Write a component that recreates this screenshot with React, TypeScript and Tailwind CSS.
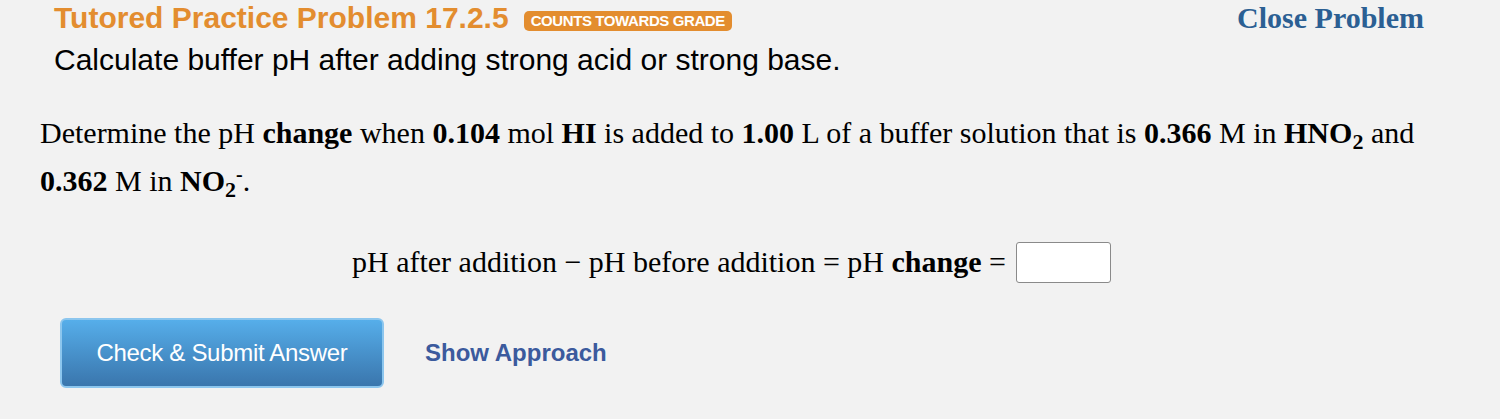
export default function App() {
  return (
    <div className="min-h-[419px] w-[1500px] bg-[#f2f2f2] text-black">
      <div className="flex items-start justify-between pl-[54px] pr-[76px] pt-[3px]">
        <div className="font-['Liberation_Sans',Arial,sans-serif]">
          <div className="flex items-center gap-[15px]">
            <h1 className="text-[30px] font-bold leading-[30px] text-[#e38d2f]">Tutored Practice Problem 17.2.5</h1>
            <span className="mt-[6px] rounded-[5px] bg-[#e38d2f] px-[7px] text-[15px] font-bold leading-[20px] tracking-[-0.4px] text-white">
              COUNTS TOWARDS GRADE
            </span>
          </div>
          <p className="mt-[12px] text-[30px] leading-[30px]">Calculate buffer pH after adding strong acid or strong base.</p>
        </div>
        <a href="#" className="font-['Liberation_Serif','Times_New_Roman',serif] text-[30px] font-bold leading-[30px] text-[#2b5f93]">
          Close Problem
        </a>
      </div>

      <div className="px-[40px] pt-[34px] font-['Liberation_Serif','Times_New_Roman',serif] text-[30px] leading-[48px]">
        <p>
          Determine the pH <b>change</b> when <b>0.104</b> mol <b>HI</b> is added to <b>1.00</b> L of a buffer solution that is{' '}
          <b>0.366</b> M in{' '}
          <b>
            HNO<sub className="text-[22px]">2</sub>
          </b>{' '}
          and <b>0.362</b> M in{' '}
          <b>
            NO<sub className="text-[22px]">2</sub>
            <sup className="text-[20px]">-</sup>
          </b>
          .
        </p>

        <div className="mt-[33px] flex items-center pl-[312px]">
          <span>
            pH after addition − pH before addition = pH <b>change</b> =
          </span>
          <input
            type="text"
            className="ml-[10px] h-[41px] w-[95px] rounded-[3px] border border-[#8a8a8a] bg-white"
          />
        </div>
      </div>

      <div className="mt-[32px] flex items-center pl-[60px] font-['Liberation_Sans',Arial,sans-serif]">
        <button className="h-[70px] w-[324px] rounded-[6px] border-2 border-[#8cc6ee] bg-gradient-to-b from-[#56aeea] to-[#3a76ad] text-[24px] tracking-[-0.3px] text-white">
          Check &amp; Submit Answer
        </button>
        <a href="#" className="ml-[41px] text-[24px] font-bold text-[#3b5a9d]">
          Show Approach
        </a>
      </div>
    </div>
  )
}
